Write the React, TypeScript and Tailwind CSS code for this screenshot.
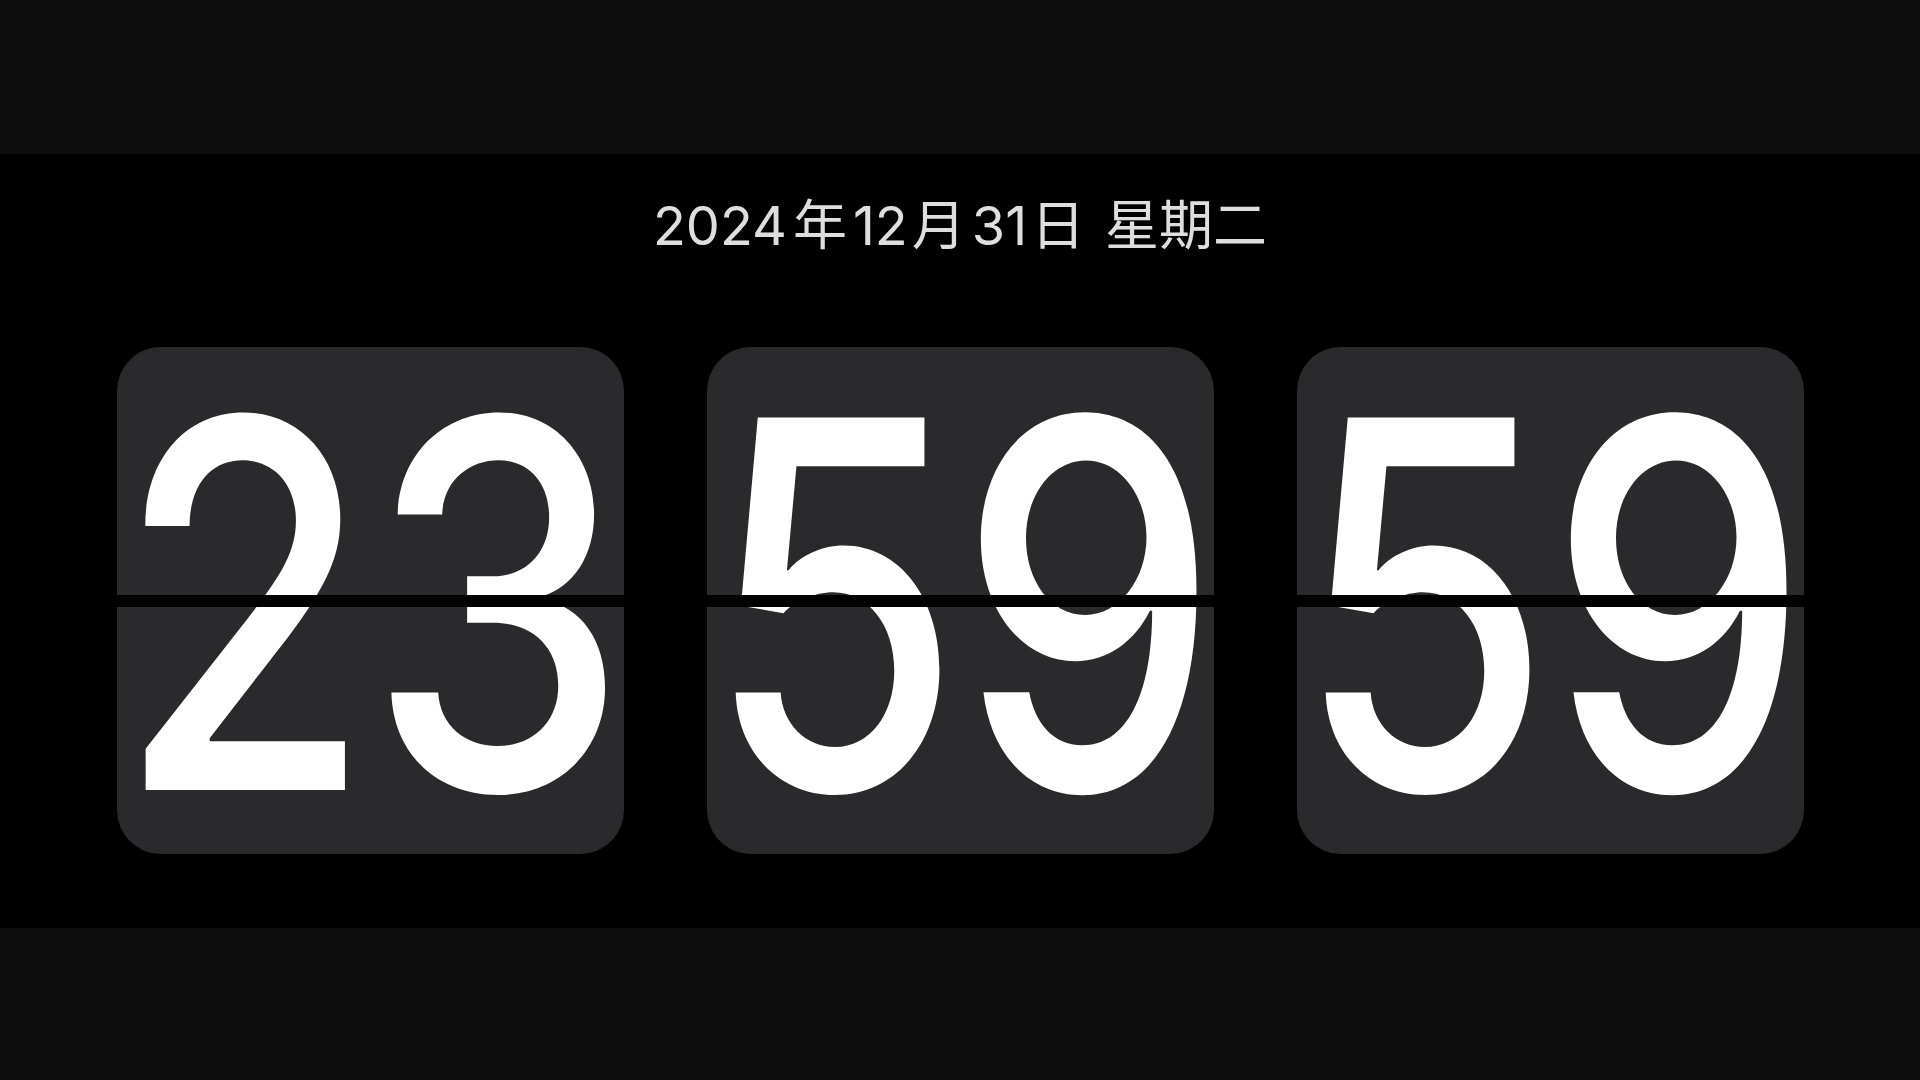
import React from "react";

const FlipCard: React.FC<{ value: string }> = ({ value }) => {
  return (
    <div className="relative flex h-[507px] w-[507px] items-center justify-center overflow-hidden rounded-[44px] bg-[#2a2a2c]">
      {/* big digits */}
      <span
        className="inline-block translate-y-[3px] scale-x-[0.81] text-[512px] leading-none font-medium tracking-[-0.01em] text-white"
        style={{ fontFamily: "Inter, 'Liberation Sans', sans-serif" }}
      >
        {value}
      </span>
      {/* the split across the middle */}
      <div className="absolute inset-x-0 top-1/2 h-[12px] -translate-y-1/2 bg-black" />
    </div>
  );
};

export default function App() {
  return (
    <div className="flex h-screen w-full flex-col bg-[#0c0c0c]">
      <div className="h-[154px] shrink-0" />

      <div className="flex h-[774px] shrink-0 flex-col items-center bg-black pt-[40px]">
        {/* date line */}
        <div
          className="text-[54px] leading-[64px] font-normal text-[#dedede]"
          style={{ fontFamily: "Inter, 'Noto Sans CJK SC', sans-serif" }}
        >
          2024<span className="ml-[6px]">年</span>
          <span className="ml-[6px]">12</span>
          <span className="ml-[4px]">月</span>
          <span className="ml-[6px]">31</span>
          <span className="ml-[4px]">日</span>
          <span className="ml-[20px]">星期二</span>
        </div>

        {/* clock cards */}
        <div className="mt-[89px] flex gap-[83px]">
          <FlipCard value="23" />
          <FlipCard value="59" />
          <FlipCard value="59" />
        </div>
      </div>

      <div className="flex-1" />
    </div>
  );
}
